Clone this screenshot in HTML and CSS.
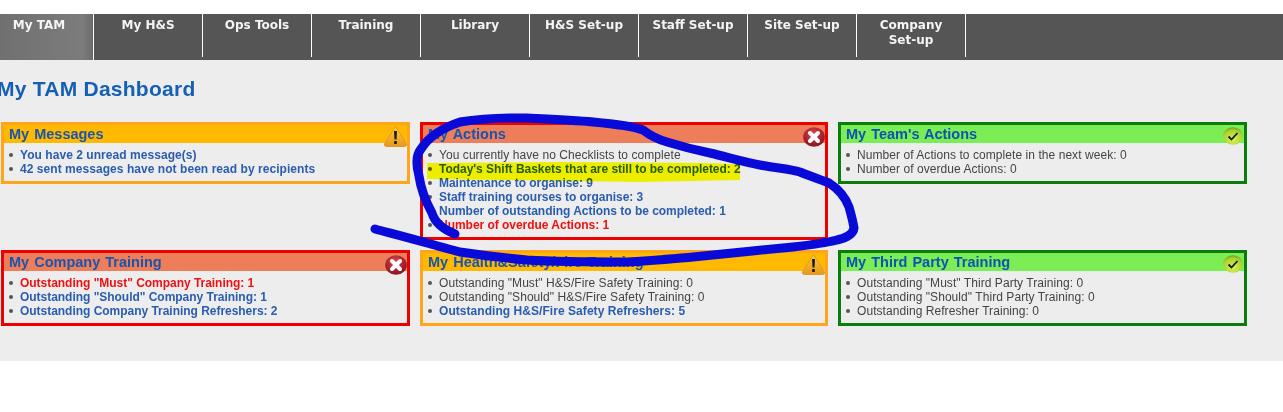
FILE: index.html
```html
<!DOCTYPE html>
<html lang="en">
<head>
<meta charset="utf-8">
<title>My TAM Dashboard</title>
<link rel="stylesheet" href="styles.css">
</head>
<body>
<svg width="0" height="0" class="defs">
  <defs>
    <linearGradient id="gw" x1="0" y1="0" x2="0" y2="1"><stop offset="0" stop-color="#ffcf3a"/><stop offset="1" stop-color="#e8961c"/></linearGradient>
    <radialGradient id="gx" cx="0.45" cy="0.3" r="0.8"><stop offset="0" stop-color="#d9404a"/><stop offset="1" stop-color="#7e0f16"/></radialGradient>
    <radialGradient id="gc" cx="0.5" cy="0.7" r="0.75"><stop offset="0" stop-color="#dcf25a"/><stop offset="0.7" stop-color="#a8d22c"/><stop offset="1" stop-color="#5e8e18"/></radialGradient>
    <symbol id="warn" viewBox="0 0 23 21"><path d="M11.500 .5 L22.500 18 Q23 20.500 20.500 20.500 L2.500 20.500 Q0 20.500 .5 18 Z" fill="url(#gw)" stroke="#d99a2c"/><path d="M10 5h3l-.5 8.500h-2z M10.200 15h2.600v3h-2.600z" fill="#1c1c1c"/></symbol>
    <symbol id="cross" viewBox="0 0 22 20" preserveAspectRatio="none"><ellipse cx="11" cy="10" rx="10.800" ry="9.800" fill="url(#gx)"/><path d="M7 6 L15 14 M15 6 L7 14" stroke="#fff" stroke-width="4" stroke-linecap="round"/></symbol>
    <symbol id="tick" viewBox="0 0 20 18" preserveAspectRatio="none"><ellipse cx="10" cy="9" rx="9.800" ry="8.800" fill="url(#gc)"/><path d="M5.500 9.500 L8.500 12.500 L14.500 6" fill="none" stroke="#15200a" stroke-width="1.800"/></symbol>
  </defs>
</svg>
<nav class="nav">
  <a class="nav-item active">My TAM</a>
  <a class="nav-item">My H&amp;S</a>
  <a class="nav-item">Ops Tools</a>
  <a class="nav-item">Training</a>
  <a class="nav-item">Library</a>
  <a class="nav-item">H&amp;S Set-up</a>
  <a class="nav-item">Staff Set-up</a>
  <a class="nav-item">Site Set-up</a>
  <a class="nav-item">Company<br>Set-up</a>
</nav>
<main class="content">
  <h1 class="title">My TAM Dashboard</h1>
  <div class="grid">
    <section class="card amber">
      <h2>My Messages</h2>
      <svg class="icon warn"><use href="#warn"/></svg>
      <ul>
        <li class="link">You have 2 unread message(s)</li>
        <li class="link">42 sent messages have not been read by recipients</li>
      </ul>
    </section>
    <section class="card red">
      <h2>My Actions</h2>
      <svg class="icon cross"><use href="#cross"/></svg>
      <ul>
        <li>You currently have no Checklists to complete</li>
        <li class="link">Today's Shift Baskets that are still to be completed: 2</li>
        <li class="link">Maintenance to organise: 9</li>
        <li class="link">Staff training courses to organise: 3</li>
        <li class="link">Number of outstanding Actions to be completed: 1</li>
        <li class="alert">Number of overdue Actions: 1</li>
      </ul>
    </section>
    <section class="card green">
      <h2>My Team's Actions</h2>
      <svg class="icon tick"><use href="#tick"/></svg>
      <ul>
        <li>Number of Actions to complete in the next week: 0</li>
        <li>Number of overdue Actions: 0</li>
      </ul>
    </section>
    <section class="card red">
      <h2>My Company Training</h2>
      <svg class="icon cross"><use href="#cross"/></svg>
      <ul>
        <li class="alert">Outstanding "Must" Company Training: 1</li>
        <li class="link">Outstanding "Should" Company Training: 1</li>
        <li class="link">Outstanding Company Training Refreshers: 2</li>
      </ul>
    </section>
    <section class="card amber">
      <h2>My Health&amp;Safety/Fire Training</h2>
      <svg class="icon warn"><use href="#warn"/></svg>
      <ul>
        <li>Outstanding "Must" H&amp;S/Fire Safety Training: 0</li>
        <li>Outstanding "Should" H&amp;S/Fire Safety Training: 0</li>
        <li class="link">Outstanding H&amp;S/Fire Safety Refreshers: 5</li>
      </ul>
    </section>
    <section class="card green">
      <h2>My Third Party Training</h2>
      <svg class="icon tick"><use href="#tick"/></svg>
      <ul>
        <li>Outstanding "Must" Third Party Training: 0</li>
        <li>Outstanding "Should" Third Party Training: 0</li>
        <li>Outstanding Refresher Training: 0</li>
      </ul>
    </section>
  </div>
</main>
<svg class="markup" width="1283" height="412" viewBox="0 0 1283 412">
  <path class="highlight" d="M427 163 L560 162 L700 163 L740 164 L740 180 L640 182 L500 180 L427 179 Z"/>
  <path class="scribble" d="M455 234 C440 228 434 220 432 213 C426 202 421 190 419 176 C416 165 416 155 421 149 C428 138 442 128 460 122 C490 117 510 118 527 118 C550 119 575 120 593 122 C615 124 632 126 643 130 C652 137 660 140 667 142 C680 146 695 150 710 153 C727 157 745 162 760 165 C775 168 790 169 800 172 C812 177 822 180 829 183 C840 190 846 199 849 207 C851 214 853 222 854 228 C853 235 846 238 837 240 C825 243 810 245 793 247 C760 250 725 254 693 257 C670 259 650 261 627 262 C595 262 560 262 527 260 C505 258 480 255 460 252 C448 249 438 246 427 243 C410 238 390 233 375 229"/>
</svg>
</body>
</html>
```
FILE: styles.css
```css
* { box-sizing: border-box; }
html, body { margin: 0; padding: 0; }
body {
  position: relative;
  width: 1283px;
  height: 412px;
  overflow: hidden;
  background: #fff;
  padding-top: 14px;
  font-family: "Liberation Sans", Arial, sans-serif;
}
.defs { position: absolute; }
.nav {
  display: flex;
  height: 46px;
  margin-left: -15px;
  background: #555;
}
.nav-item {
  width: 109px;
  height: 43px;
  padding-top: 4px;
  border-right: 1px solid #fff;
  color: #f4f4f4;
  font: bold 12px/15px "DejaVu Sans", Verdana, sans-serif;
  text-align: center;
}
.nav-item.active {
  background: linear-gradient(90deg, #666 0%, #707070 15%, #7c7c7c 90%, #6c6c6c 100%);
  height: 46px;
  box-shadow: inset -1px 0 0 #666;
}
.content {
  height: 301px;
  padding-top: 17px;
  background: #ededed;
}
.title {
  margin: 0 0 22px -3px;
  color: #1560b5;
  font-size: 21px;
  line-height: 23px;
  font-weight: bold;
  letter-spacing: .25px;
}
.grid {
  display: grid;
  grid-template-columns: 409px 408px 409px;
  gap: 10px;
  align-items: start;
  margin-left: 1px;
}
.card {
  position: relative;
  border: 3px solid;
}
.card h2 {
  height: 18px;
  margin: 0;
  padding-left: 5px;
  color: #1a55ad;
  font-size: 14.5px;
  line-height: 18px;
  font-weight: bold;
  word-spacing: 1px;
}
.card ul {
  margin: 0;
  padding: 5px 0 5px 5px;
  list-style: none;
  color: #444;
  font-size: 12px;
  line-height: 14px;
  letter-spacing: .06px;
}
.card li::before {
  content: "";
  display: inline-block;
  width: 4px;
  height: 4px;
  margin-right: 7px;
  border-radius: 50%;
  background: #555;
  vertical-align: 2px;
}
.link { color: #2a5db0; font-weight: bold; letter-spacing: -.03px; }
.alert { color: #ee1111; font-weight: bold; letter-spacing: -.03px; }
.amber { border-color: #ffa51c; }
.amber h2 { background: #ffb900; }
.amber .link { letter-spacing: .05px; }
.red { border-color: #ee0000; }
.red h2 { background: #ee7d5a; }
.green { border-color: #0b7d0b; }
.green h2 { background: #7ded55; color: #0b55b0; }
.icon { position: absolute; }
.warn { top: 1px; right: 0; width: 23px; height: 21px; }
.cross { top: 2px; right: 0; width: 22px; height: 20px; }
.tick { top: 2px; right: 1px; width: 20px; height: 18px; }
.markup {
  position: absolute;
  top: 0;
  left: 0;
  pointer-events: none;
}
.highlight {
  fill: #ffff00;
  mix-blend-mode: multiply;
}
.scribble {
  fill: none;
  stroke: #0a0ad8;
  stroke-width: 9;
  stroke-linecap: round;
  stroke-linejoin: round;
}
```
